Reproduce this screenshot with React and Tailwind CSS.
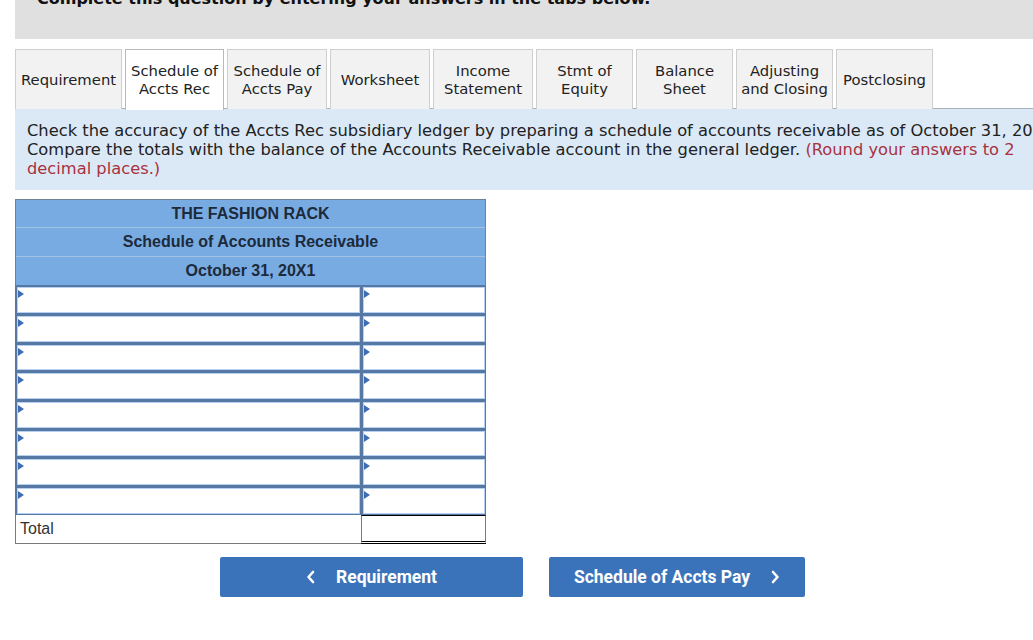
import React from "react";

const tabs = [
  { w: "w-[107px]", lines: ["Requirement"] },
  { w: "w-[99px]", lines: ["Schedule of", "Accts Rec"], active: true },
  { w: "w-[100px]", lines: ["Schedule of", "Accts Pay"] },
  { w: "w-[100px]", lines: ["Worksheet"] },
  { w: "w-[100px]", lines: ["Income", "Statement"] },
  { w: "w-[97px]", lines: ["Stmt of", "Equity"] },
  { w: "w-[97px]", lines: ["Balance", "Sheet"] },
  { w: "w-[97px]", lines: ["Adjusting", "and Closing"] },
  { w: "w-[97px]", lines: ["Postclosing"] },
];

const rowHeights = ["h-[29px]", "h-[29px]", "h-[28px]", "h-[29px]", "h-[29px]", "h-[28px]", "h-[29px]", "h-[29px]"];

function Marker() {
  return (
    <span className="absolute left-[1px] top-[3px] w-0 h-0 border-y-[4px] border-y-transparent border-l-[6px] border-l-[#3d6eb5]" />
  );
}

function InputCell({ className }) {
  return (
    <div
      className={`relative bg-white border-t-2 border-l-2 border-r border-b border-[#5878a4] shadow-[inset_0_0_0_1px_#b4d0f2] ${className}`}
    >
      <Marker />
    </div>
  );
}

export default function App() {
  return (
    <div className="w-[1033px] h-[640px] overflow-hidden bg-white font-['DejaVu_Sans',sans-serif] text-[#222]">
      <div className="ml-[15px] w-[1100px]">
        {/* banner */}
        <div className="h-[39px] bg-[#e0e0e0] overflow-hidden">
          <p className="-mt-[11px] pl-[22px] text-[16px] leading-[20px] font-bold text-[#111] whitespace-nowrap">
            Complete this question by entering your answers in the tabs below.
          </p>
        </div>

        {/* tabs */}
        <div className="mt-[10px] flex gap-[3px] border-b border-[#a7b2bd] h-[60px]">
          {tabs.map((t, i) => (
            <div
              key={i}
              className={`${t.w} h-[60px] flex flex-col items-center justify-center text-[14.8px] leading-[18px] text-[#222] border border-b-0 ${
                t.active
                  ? "bg-white border-[#b9b9b9] h-[61px] -mb-px z-10"
                  : "bg-[#f2f2f2] border-[#cfcfcf]"
              }`}
            >
              {t.lines.map((l, j) => (
                <span key={j} className="whitespace-nowrap">
                  {l}
                </span>
              ))}
            </div>
          ))}
        </div>

        {/* instructions */}
        <div className="bg-[#dbe9f7] pt-[12px] pb-[12px] pl-[12px] text-[16.3px] leading-[19px] text-[#222] whitespace-nowrap overflow-hidden">
          <div>
            Check the accuracy of the Accts Rec subsidiary ledger by preparing a schedule of accounts receivable as of October 31, 20X1.
          </div>
          <div>
            Compare the totals with the balance of the Accounts Receivable account in the general ledger.{" "}
            <span className="text-[#a8323e]">(Round your answers to 2</span>
          </div>
          <div className="text-[#a8323e]">decimal places.)</div>
        </div>

        {/* table */}
        <div className="mt-[9px] w-[471px] font-['Liberation_Sans',Arial,sans-serif]">
          <div className="border border-[#6f8298] border-b-0">
            <div className="h-[28px] bg-[#79abe3] border-b border-[#a3c1e3] flex items-center justify-center text-[16px] font-bold text-[#1c2a3a]">
              THE FASHION RACK
            </div>
            <div className="h-[29px] bg-[#79abe3] border-b border-[#a3c1e3] flex items-center justify-center text-[16px] font-bold text-[#1c2a3a]">
              Schedule of Accounts Receivable
            </div>
            <div className="h-[28px] bg-[#79abe3] flex items-center justify-center text-[16px] font-bold text-[#1c2a3a]">
              October 31, 20X1
            </div>
          </div>
          {rowHeights.map((h, i) => (
            <div key={i} className={`flex ${h}`}>
              <InputCell className="w-[346px]" />
              <InputCell className="w-[125px]" />
            </div>
          ))}
          <div className="flex h-[29px]">
            <div className="w-[346px] border-l border-b border-[#7a7a7a] flex items-center pl-[4px] text-[16px] text-[#333]">
              Total
            </div>
            <div className="w-[125px] border-l border-r border-[#7a7a7a] border-t border-t-black border-b-[3px] border-b-black border-double" />
          </div>
        </div>

        {/* nav buttons */}
        <div className="mt-[13px] ml-[205px] flex gap-[26px] font-['Roboto',sans-serif]">
          <button className="w-[303px] h-[40px] bg-[#3a73b9] rounded-[2px] flex items-center justify-center gap-[20px] text-white text-[17.5px] font-bold">
            <svg width="10" height="14" viewBox="0 0 10 14">
              <polyline points="7,2 2.5,7 7,12" fill="none" stroke="white" strokeWidth="2.6" strokeLinecap="round" strokeLinejoin="round" />
            </svg>
            <span>Requirement</span>
          </button>
          <button className="w-[256px] h-[40px] bg-[#3a73b9] rounded-[2px] flex items-center justify-center gap-[20px] text-white text-[17.5px] font-bold">
            <span>Schedule of Accts Pay</span>
            <svg width="10" height="14" viewBox="0 0 10 14">
              <polyline points="3,2 7.5,7 3,12" fill="none" stroke="white" strokeWidth="2.6" strokeLinecap="round" strokeLinejoin="round" />
            </svg>
          </button>
        </div>
      </div>
    </div>
  );
}
